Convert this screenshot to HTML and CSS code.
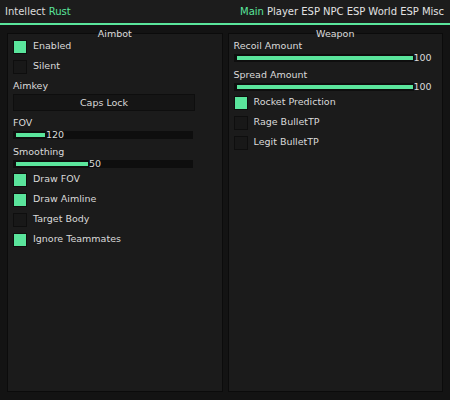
FILE: index.html
```html
<!DOCTYPE html>
<html>
<head>
<meta charset="utf-8">
<link rel="stylesheet" href="styles.css">
</head>
<body>
<header class="topbar">
  <div class="brand">Intellect <span class="accent">Rust</span></div>
  <nav class="tabs">
    <span class="tab active">Main</span>
    <span class="tab">Player ESP</span>
    <span class="tab">NPC ESP</span>
    <span class="tab">World ESP</span>
    <span class="tab">Misc</span>
  </nav>
</header>
<main class="content">
  <fieldset class="panel">
    <legend class="panel-title">Aimbot</legend>
    <div class="stack">
      <div class="check"><span class="box on"></span><span class="label">Enabled</span></div>
      <div class="check"><span class="box"></span><span class="label">Silent</span></div>
      <div class="field">
        <div class="label">Aimkey</div>
        <div class="keybtn">Caps Lock</div>
      </div>
      <div class="field range">
        <div class="label">FOV</div>
        <div class="slider"><div class="fill" style="width:29px"></div><span class="value">120</span></div>
      </div>
      <div class="field range">
        <div class="label">Smoothing</div>
        <div class="slider"><div class="fill" style="width:72px"></div><span class="value">50</span></div>
      </div>
      <div class="check"><span class="box on"></span><span class="label">Draw FOV</span></div>
      <div class="check"><span class="box on"></span><span class="label">Draw Aimline</span></div>
      <div class="check"><span class="box"></span><span class="label">Target Body</span></div>
      <div class="check"><span class="box on"></span><span class="label">Ignore Teammates</span></div>
    </div>
  </fieldset>
  <fieldset class="panel">
    <legend class="panel-title">Weapon</legend>
    <div class="stack">
      <div class="field range">
        <div class="label">Recoil Amount</div>
        <div class="slider"><div class="fill" style="width:176px"></div><span class="value">100</span></div>
      </div>
      <div class="field range">
        <div class="label">Spread Amount</div>
        <div class="slider"><div class="fill" style="width:176px"></div><span class="value">100</span></div>
      </div>
      <div class="check"><span class="box on"></span><span class="label">Rocket Prediction</span></div>
      <div class="check"><span class="box"></span><span class="label">Rage BulletTP</span></div>
      <div class="check"><span class="box"></span><span class="label">Legit BulletTP</span></div>
    </div>
  </fieldset>
</main>
</body>
</html>
```
FILE: styles.css
```css
html, body {
  margin: 0;
  padding: 0;
}
body {
  width: 450px;
  height: 400px;
  background: #131313;
  color: #dadada;
  font-family: "DejaVu Sans", "Liberation Sans", sans-serif;
  font-size: 9.5px;
  display: flex;
  flex-direction: column;
  overflow: hidden;
}
.topbar {
  height: 23px;
  background: #1c1c1c;
  border-bottom: 2px solid #5ae59c;
  display: flex;
  justify-content: space-between;
  align-items: center;
  padding: 0 6px 0 5px;
  font-size: 10px;
  line-height: 23px;
  flex: none;
}
.accent, .tab.active {
  color: #5ae59c;
}
.tabs {
  display: flex;
  gap: 3px;
}
.tab {
  color: #e2e2e2;
}
.brand {
  color: #dcdcdc;
}
.content {
  flex: 1;
  display: flex;
  gap: 5px;
  padding: 2px 7px 8px 7px;
  min-height: 0;
}
.panel {
  flex: 1;
  min-width: 0;
  margin: 0;
  padding: 0 5px;
  border: 1px solid #0b0b0b;
  background: #1b1b1b;
}
.panel-title {
  margin: 0 auto;
  padding: 0;
  line-height: 13px;
  color: #dcdcdc;
}
.stack {
  display: flex;
  flex-direction: column;
  gap: 6px;
}
.label {
  line-height: 12px;
  white-space: nowrap;
}
.check {
  display: flex;
  align-items: flex-start;
  gap: 6px;
  height: 14px;
}
.box {
  box-sizing: border-box;
  width: 14px;
  height: 14px;
  border: 1px solid #0e0e0e;
  background: #181818;
  flex: none;
}
.box.on {
  background: #5ae59c;
}
.field {
  display: flex;
  flex-direction: column;
  gap: 2px;
}
.range + .range {
  margin-top: 1px;
}
.range + .check {
  margin-top: -1px;
}
.keybtn {
  box-sizing: border-box;
  width: 182px;
  height: 17px;
  background: #151515;
  border: 1px solid #0e0e0e;
  text-align: center;
  line-height: 15px;
  color: #dadada;
}
.slider {
  box-sizing: border-box;
  width: 180px;
  height: 8px;
  background: #0e0e0e;
  display: flex;
  align-items: center;
  padding: 0 1px 0 3px;
}
.fill {
  height: 4px;
  background: #5ae59c;
  flex: none;
}
.value {
  margin-left: 1px;
  line-height: 8px;
  white-space: nowrap;
  color: #dadada;
}
```
